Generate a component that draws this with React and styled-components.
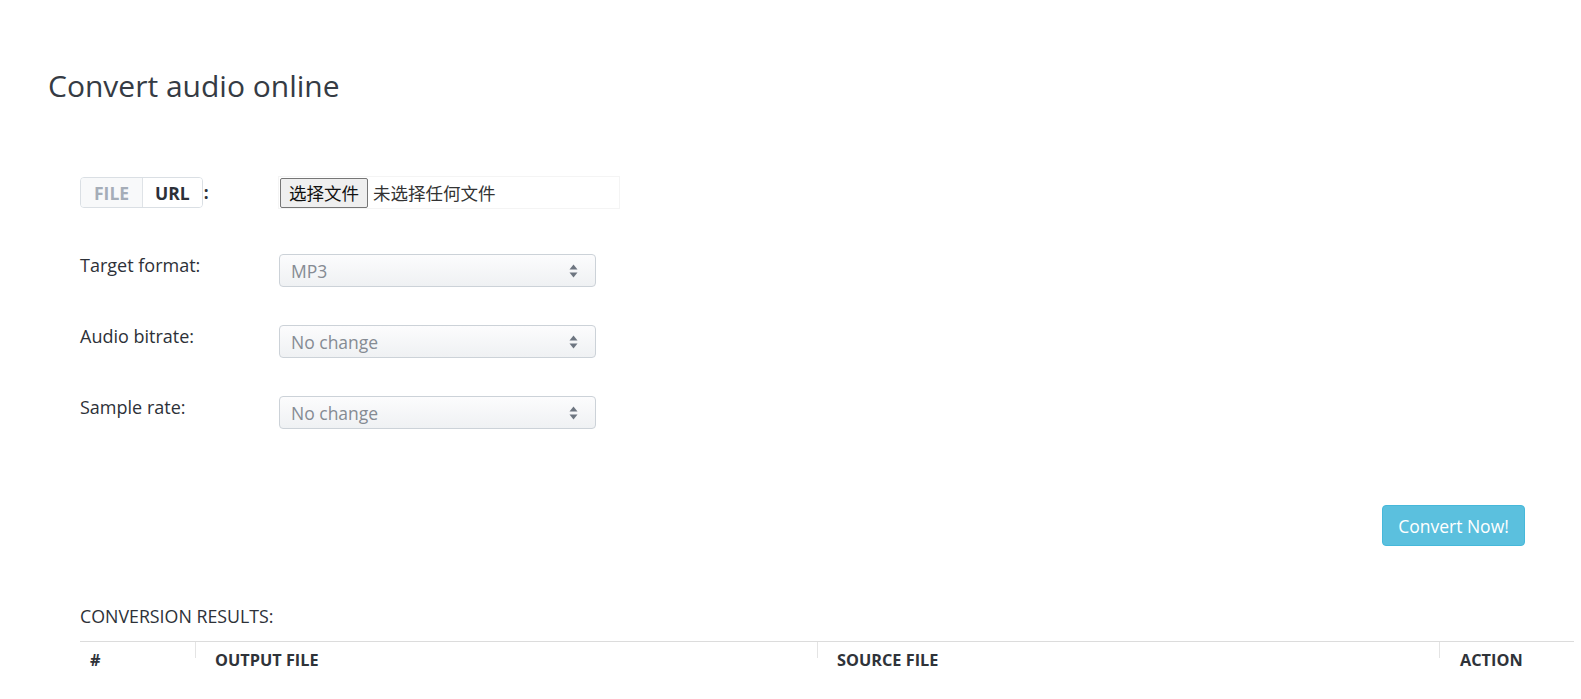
import React from "react";
import styled, { createGlobalStyle } from "styled-components";

const Global = createGlobalStyle`
  html, body { margin: 0; padding: 0; background: #fff; }
  body { font-family: "Open Sans", "Noto Sans CJK SC", sans-serif; color: #333; }
  * { box-sizing: border-box; }
`;

const Page = styled.div`
  width: 1581px;
  padding: 66px 0 0 48px;
`;

const Title = styled.h1`
  margin: 0;
  font-family: "Open Sans", sans-serif;
  font-weight: 400;
  font-size: 30px;
  line-height: 40px;
  color: #353b44;
`;

const Form = styled.div`
  margin-top: 70px;
  margin-left: 32px;
  width: 1445px;
`;

const Row = styled.div`
  display: flex;
  align-items: ${(p) => (p.$center ? "center" : "flex-start")};
  height: 33px;
  margin-bottom: ${(p) => p.$gap}px;
`;

const Label = styled.div`
  width: 199px;
  flex: none;
  font-size: 18px;
  line-height: 22px;
  color: #2d3138;
  padding-top: ${(p) => p.$pt || 0}px;
  display: flex;
  align-items: center;
`;

const Toggle = styled.div`
  display: inline-flex;
  height: 31px;
  border: 1px solid #dadfe4;
  border-radius: 4px;
  background: #fbfcfc;
  overflow: hidden;
`;

const ToggleItem = styled.div`
  display: flex;
  align-items: center;
  padding: 0 ${(p) => p.$px}px;
  font-weight: 700;
  font-size: 17.5px;
  color: ${(p) => (p.$active ? "#2c3038" : "#a5adb8")};
  background: ${(p) => (p.$active ? "#fff" : "#f8f9fa")};
  & + & { border-left: 1px solid #dfe3e7; }
`;

const Colon = styled.span`
  margin-left: 1px;
  font-weight: 700;
  font-size: 17px;
`;

const FileBox = styled.div`
  display: flex;
  align-items: center;
  width: 342px;
  height: 33px;
  margin-left: -1px;
  border: 1px solid #f4f4f4;
  padding-left: 1px;
  font-family: "Noto Sans CJK SC", sans-serif;
`;

const FileButton = styled.div`
  height: 30px;
  padding: 0 8px;
  display: flex;
  align-items: center;
  background: #efefef;
  border: 1px solid #767676;
  border-radius: 2px;
  font-size: 17.5px;
  color: #111;
`;

const FileText = styled.span`
  margin-left: 5px;
  font-size: 17.5px;
  color: #333;
`;

const Select = styled.div`
  width: 317px;
  height: 33px;
  display: flex;
  align-items: center;
  justify-content: space-between;
  padding: 0 17px 0 11px;
  border: 1px solid #ccd2d8;
  border-radius: 4px;
  background: linear-gradient(#fcfcfd, #eff1f3);
  font-size: 17.5px;
  color: #858b93;
`;

const Actions = styled.div`
  display: flex;
  justify-content: flex-end;
  margin-top: 76px;
`;

const ConvertButton = styled.button`
  width: 143px;
  height: 41px;
  border: 1px solid #46b8da;
  border-radius: 4px;
  background: #5bc0de;
  color: #fff;
  font-family: "Open Sans", sans-serif;
  font-size: 17.5px;
  padding: 0;
`;

const ResultsTitle = styled.div`
  margin-top: 59px;
  font-size: 17.8px;
  line-height: 22px;
  color: #2d3138;
`;

const Table = styled.div`
  display: grid;
  grid-template-columns: 115px 622px 622px 135px;
  margin-top: 14px;
  margin-left: 32px;
  width: 1494px;
  border-top: 1px solid #dcdcdc;
`;

const Th = styled.div`
  padding: 7px 0 0 ${(p) => p.$pl}px;
  height: 40px;
  font-weight: 700;
  font-size: 16.3px;
  line-height: 22px;
  color: #2f3339;
  background: ${(p) =>
    p.$divider ? "linear-gradient(#e4e4e4, #e4e4e4) left top / 1px 16px no-repeat" : "none"};
`;

const Arrows = () => (
  <svg width="9" height="14" viewBox="0 0 9 14">
    <path d="M4.5 0.5 L8.5 5.5 H0.5 Z" fill="#6d7580" />
    <path d="M4.5 13.5 L8.5 8.5 H0.5 Z" fill="#6d7580" />
  </svg>
);

export default function App() {
  return (
    <>
      <Global />
      <Page>
        <Title>Convert audio online</Title>
        <Form>
          <Row $center $gap={45}>
            <Label>
              <Toggle>
                <ToggleItem $px={13}>FILE</ToggleItem>
                <ToggleItem $px={12} $active>URL</ToggleItem>
              </Toggle>
              <Colon>:</Colon>
            </Label>
            <FileBox>
              <FileButton>选择文件</FileButton>
              <FileText>未选择任何文件</FileText>
            </FileBox>
          </Row>
          <Row $gap={38}>
            <Label $pt={0}>Target format:</Label>
            <Select>
              <span>MP3</span>
              <Arrows />
            </Select>
          </Row>
          <Row $gap={38}>
            <Label $pt={0}>Audio bitrate:</Label>
            <Select>
              <span>No change</span>
              <Arrows />
            </Select>
          </Row>
          <Row $gap={0}>
            <Label $pt={0}>Sample rate:</Label>
            <Select>
              <span>No change</span>
              <Arrows />
            </Select>
          </Row>
          <Actions>
            <ConvertButton>Convert Now!</ConvertButton>
          </Actions>
          <ResultsTitle>CONVERSION RESULTS:</ResultsTitle>
        </Form>
        <Table>
          <Th $pl={10}>#</Th>
          <Th $pl={20} $divider>OUTPUT FILE</Th>
          <Th $pl={20} $divider>SOURCE FILE</Th>
          <Th $pl={21} $divider>ACTION</Th>
        </Table>
      </Page>
    </>
  );
}
